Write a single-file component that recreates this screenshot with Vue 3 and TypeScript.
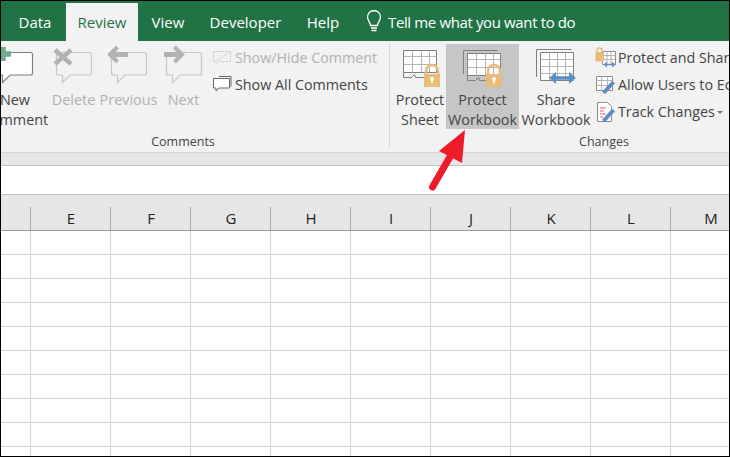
<script setup lang="ts">
const tabs = [
  { name: 'Data', width: 65 },
  { name: 'Review', width: 72, active: true },
  { name: 'View', width: 60 },
  { name: 'Developer', width: 95 },
  { name: 'Help', width: 60 },
]

const columns = ['E', 'F', 'G', 'H', 'I', 'J', 'K', 'L', 'M']
const rows = Array.from({ length: 10 }, (_, i) => i)
</script>

<template>
  <div class="page">
    <div class="tabbar">
      <div
        v-for="tab in tabs"
        :key="tab.name"
        class="tab"
        :class="{ active: tab.active }"
        :style="{ width: tab.width + 'px' }"
      >
        {{ tab.name }}
      </div>
      <div class="tell">
        <svg width="16" height="24" viewBox="0 0 16 24" fill="none" stroke="#fff">
          <path d="M4.500 15.500c0-3-3-4.500-3-8.500a6.500 6.500 0 0 1 13 0c0 4-3 5.500-3 8.500z" stroke-width="1.300" />
          <path d="M5 18h6M5.500 20.500h5" stroke-width="1.500" />
        </svg>
        <span>Tell me what you want to do</span>
      </div>
    </div>

    <div class="ribbon">
      <section class="group comments">
        <div class="group-body">
          <div class="big-btn new">
            <svg width="60" height="44" viewBox="0 0 60 44">
              <path d="M13 8.500h32.500q2 0 2 2V29q0 2-2 2H25l-7.500 7.500V31H13z" fill="#fff" stroke="#7f7f7f" stroke-width="1.200" />
              <path d="M18 3v14M10 10h16" stroke="#6fab8d" stroke-width="5.500" />
            </svg>
            <span>New<br />Comment</span>
          </div>
          <div class="big-btn off">
            <svg width="55" height="44" viewBox="0 0 55 44" fill="none">
              <path d="M12.500 8.500h31q2 0 2 2V29q0 2-2 2H24l-7.500 7.500V31h-4q-2 0-2-2V10.500q0-2 2-2z" stroke="#c6c6c6" stroke-width="1.200" />
              <path d="M9 6l16 14M25 6L9 20" stroke="#b2b2b2" stroke-width="4.500" />
            </svg>
            <span>Delete</span>
          </div>
          <div class="big-btn off">
            <svg width="55" height="44" viewBox="0 0 55 44" fill="none">
              <path d="M12.500 8.500h31q2 0 2 2V29q0 2-2 2H24l-7.500 7.500V31h-4q-2 0-2-2V10.500q0-2 2-2z" stroke="#c6c6c6" stroke-width="1.200" />
              <path d="M10 10.500h17" stroke="#b2b2b2" stroke-width="5" />
              <path d="M16.500 3l-7.500 7.500 7.500 7.500" stroke="#b2b2b2" stroke-width="4" />
            </svg>
            <span>Previous</span>
          </div>
          <div class="big-btn off">
            <svg width="55" height="44" viewBox="0 0 55 44" fill="none">
              <path d="M12.500 8.500h31q2 0 2 2V29q0 2-2 2H24l-7.500 7.500V31h-4q-2 0-2-2V10.500q0-2 2-2z" stroke="#c6c6c6" stroke-width="1.200" />
              <path d="M8 10.500h17" stroke="#b2b2b2" stroke-width="5" />
              <path d="M18.500 3l7.500 7.500-7.500 7.500" stroke="#b2b2b2" stroke-width="4" />
            </svg>
            <span>Next</span>
          </div>
          <div class="small-col comment-col">
            <div class="small-btn off">
              <svg width="20" height="20" viewBox="0 0 20 20" fill="none">
                <path d="M.5 3.500h17v10H6l-3 3v-3H.5zM4 12.500L17 3.500" stroke="#c6c6c6" stroke-dasharray="2 1" />
              </svg>
              <span>Show/Hide Comment</span>
            </div>
            <div class="small-btn">
              <svg width="20" height="20" viewBox="0 0 20 20" fill="none">
                <path d="M6 1.500h12v10" stroke="#666" />
                <path d="M.5 3.500h16V13H6l-3 3v-3H.5z" fill="#fff" stroke="#666" />
              </svg>
              <span>Show All Comments</span>
            </div>
          </div>
        </div>
        <div class="group-label">Comments</div>
      </section>

      <section class="group changes">
        <div class="group-body">
          <div class="big-btn sheet-btn">
            <svg width="52" height="44" viewBox="0 0 52 44">
              <path d="M9.500 6.500h33v22h-33z" fill="#fff" stroke="#7f7f7f" />
              <path d="M9.500 12.500h33M9.500 20.500h33M18.500 6.500v22M27.500 6.500v22M35.500 6.500v22" stroke="#b5b5b5" fill="none" />
              <path d="M9.500 29v4.500h8l3-3 1 3h10" stroke="#7f7f7f" fill="none" />
              <path d="M32 30v-3a6 6 0 0 1 12 0v3" stroke="#e8bd7c" stroke-width="2.500" fill="none" />
              <path d="M30 30h16v13H30z" fill="#e8bd7c" />
              <circle cx="38" cy="35" r="2" fill="#fff" />
              <path d="M38 35.500v4" stroke="#fff" stroke-width="1.500" />
            </svg>
            <span>Protect<br />Sheet</span>
          </div>
          <div class="big-btn selected wb-btn">
            <svg width="73" height="44" viewBox="0 0 73 44">
              <path d="M17.500 30V6.500h34" stroke="#7f7f7f" fill="none" />
              <path d="M21.500 9.500h33v22h-33z" fill="#fff" stroke="#7f7f7f" />
              <path d="M21.500 15.500h33M21.500 23.500h33M30.500 9.500v22M39.500 9.500v22M47.500 9.500v22" stroke="#b5b5b5" fill="none" />
              <path d="M21.500 32v4.500h8l3-3 1 3h10" stroke="#7f7f7f" fill="none" />
              <path d="M42 30v-3a6 6 0 0 1 12 0v3" stroke="#e8bd7c" stroke-width="2.500" fill="none" />
              <path d="M40 30h16v13H40z" fill="#e8bd7c" />
              <circle cx="48" cy="35" r="2" fill="#fff" />
              <path d="M48 35.500v4" stroke="#fff" stroke-width="1.500" />
            </svg>
            <span>Protect<br />Workbook</span>
          </div>
          <div class="big-btn share-btn">
            <svg width="74" height="44" viewBox="0 0 74 44">
              <path d="M17.500 33V5.500h35" stroke="#7f7f7f" fill="none" />
              <path d="M21.500 8.500h33v28h-33z" fill="#fff" stroke="#7f7f7f" />
              <path d="M21.500 15.500h33M21.500 22.500h33M21.500 29.500h33M30.500 8.500v28M38.500 8.500v28M46.500 8.500v28" stroke="#b5b5b5" fill="none" />
              <path d="M35 34h17" stroke="#5b8fc4" stroke-width="3.500" />
              <path d="M37 28l-7 6 7 6zM50 28l7 6-7 6z" fill="#5b8fc4" />
            </svg>
            <span>Share<br />Workbook</span>
          </div>
          <div class="small-col change-col">
            <div class="small-btn">
              <svg width="21" height="24" viewBox="0 0 21 24">
                <path d="M7.500 5.500h13v13h-13z" fill="#fff" stroke="#8c8c8c" />
                <path d="M7.500 9.500h13M7.500 13.500h13M12 5.500v13M16 5.500v13" stroke="#b5b5b5" fill="none" />
                <path d="M2 6v-1.500a2.500 2.500 0 0 1 5 0V6" stroke="#e8bd7c" stroke-width="1.500" fill="none" />
                <path d="M.5 6H9v9.500H.5z" fill="#e8bd7c" />
                <path d="M11 18.500h7" stroke="#5b8fc4" stroke-width="1.500" />
                <path d="M12 15.500l-3.500 3 3.500 3zM17 15.500l3.500 3-3.500 3z" fill="#5b8fc4" />
              </svg>
              <span>Protect and Share Workbook</span>
            </div>
            <div class="small-btn">
              <svg width="21" height="24" viewBox="0 0 21 24">
                <path d="M1.500 3.500h16v14h-16z" fill="#fff" stroke="#8c8c8c" />
                <path d="M1.500 7.500h16M1.500 12.500h16M6.500 3.500v14M12.500 3.500v14" stroke="#b5b5b5" fill="none" />
                <path d="M8.500 20l10-11" stroke="#5b8fc4" stroke-width="4" />
              </svg>
              <span>Allow Users to Edit Ranges</span>
            </div>
            <div class="small-btn">
              <svg width="21" height="24" viewBox="0 0 21 24">
                <path d="M2.500 2.500h10l4 4v15h-14z" fill="#fff" stroke="#8c8c8c" />
                <path d="M5 8h6M5 11h4M5 14h6M5 17h3" stroke="#e0605c" fill="none" />
                <path d="M8.500 21l10-11" stroke="#5b8fc4" stroke-width="4" />
              </svg>
              <span>Track Changes</span>
              <i class="caret"></i>
            </div>
          </div>
        </div>
        <div class="group-label">Changes</div>
      </section>
    </div>

    <div class="band"></div>
    <div class="formula"></div>

    <div class="col-head">
      <div class="corner"></div>
      <div v-for="col in columns" :key="col" class="col">{{ col }}</div>
    </div>

    <div class="grid">
      <div v-for="row in rows" :key="row" class="row">
        <div class="corner"></div>
        <div v-for="col in columns" :key="col" class="cell"></div>
      </div>
    </div>

    <svg class="arrow" width="44" height="70" viewBox="0 0 44 70">
      <path d="M40 5l-26 21 23 12z" fill="#ee1c2a" />
      <path d="M26 30L7.500 62" stroke="#ee1c2a" stroke-width="7" stroke-linecap="round" fill="none" />
    </svg>
  </div>
</template>

<style scoped>
.page {
  position: relative;
  display: flex;
  flex-direction: column;
  width: 730px;
  height: 457px;
  box-sizing: border-box;
  overflow: hidden;
  border: 1px solid #000;
  background: #fff;
  font-family: 'Open Sans', 'Noto Sans', sans-serif;
  font-size: 14.4px;
  color: #444;
}

.tabbar {
  display: flex;
  flex: none;
  align-items: flex-end;
  height: 40px;
  background: #217346;
  color: #fff;
}

.tab {
  display: flex;
  align-items: center;
  justify-content: center;
  height: 38px;
  box-sizing: border-box;
  font-size: 15px;
}

.tab:first-child {
  padding-left: 3px;
}

.tab.active {
  background: #f2f2f2;
  color: #217346;
}

.tell {
  display: flex;
  align-items: center;
  gap: 6px;
  height: 38px;
  margin-left: 13px;
  font-size: 15px;
  letter-spacing: -0.37px;
}

.ribbon {
  display: flex;
  flex: none;
  height: 112px;
  box-sizing: border-box;
  overflow: hidden;
  padding-top: 3px;
  border-bottom: 1px solid #d4d4d4;
  background: #f2f2f2;
}

.group {
  display: flex;
  flex: none;
  flex-direction: column;
}

.comments {
  width: 404px;
  margin-bottom: 5px;
  margin-left: -16px;
  border-right: 1px solid #d4d4d4;
}

.changes {
  margin-left: 4px;
}

.group-body {
  display: flex;
  height: 85px;
}

.group-label {
  margin-top: 4px;
  font-size: 12.5px;
  line-height: 18px;
  text-align: center;
}

.comments .group-label {
  padding-right: 8px;
}

.changes .group-label {
  width: 420px;
}

.big-btn {
  display: flex;
  flex: none;
  flex-direction: column;
  align-items: center;
  width: 55px;
  line-height: 20px;
  text-align: center;
}

.big-btn svg {
  display: block;
  flex: none;
  height: 44px;
}

.big-btn span {
  margin-top: 2px;
}

.new {
  width: 60px;
  margin-right: 1px;
}

.off {
  color: #b1b1b1;
}

.sheet-btn {
  width: 52px;
}

.wb-btn {
  width: 73px;
}

.share-btn {
  width: 74px;
}

.selected {
  background: #c6c6c6;
}

.small-col {
  display: flex;
  flex-direction: column;
}

.comment-col {
  margin-left: 2px;
}

.change-col {
  margin-left: 2px;
  white-space: nowrap;
}

.small-btn {
  display: flex;
  align-items: center;
  gap: 2px;
  height: 27px;
  font-size: 14.3px;
}

.small-btn svg {
  flex: none;
}

.caret {
  margin: 2px 0 0 0;
  border: 3px solid transparent;
  border-top: 3px solid #777;
  border-bottom: 0;
}

.band {
  flex: none;
  height: 13px;
  box-sizing: border-box;
  border-bottom: 1px solid #c4c4c4;
  background: #e6e6e6;
}

.formula {
  flex: none;
  height: 28px;
  background: #fff;
}

.col-head {
  display: flex;
  flex: none;
  height: 37px;
  box-sizing: border-box;
  border-top: 1px solid #c4c4c4;
  border-bottom: 1px solid #9c9c9c;
  background: #e6e6e6;
}

.col-head .corner,
.col {
  flex: none;
  box-sizing: border-box;
  background: linear-gradient(#ababab, #ababab) right bottom / 1px 23px no-repeat;
}

.col {
  width: 80px;
  padding-top: 13px;
  color: #222;
  font-size: 15px;
  line-height: 21px;
  text-align: center;
}

.corner {
  flex: none;
  width: 30px;
}

.row {
  display: flex;
  flex: none;
  height: 24px;
  box-sizing: border-box;
  border-bottom: 1px solid #d4d4d4;
}

.row .corner,
.cell {
  flex: none;
  box-sizing: border-box;
  border-right: 1px solid #d4d4d4;
}

.cell {
  width: 80px;
}

.arrow {
  position: absolute;
  left: 424px;
  top: 124px;
}
</style>
